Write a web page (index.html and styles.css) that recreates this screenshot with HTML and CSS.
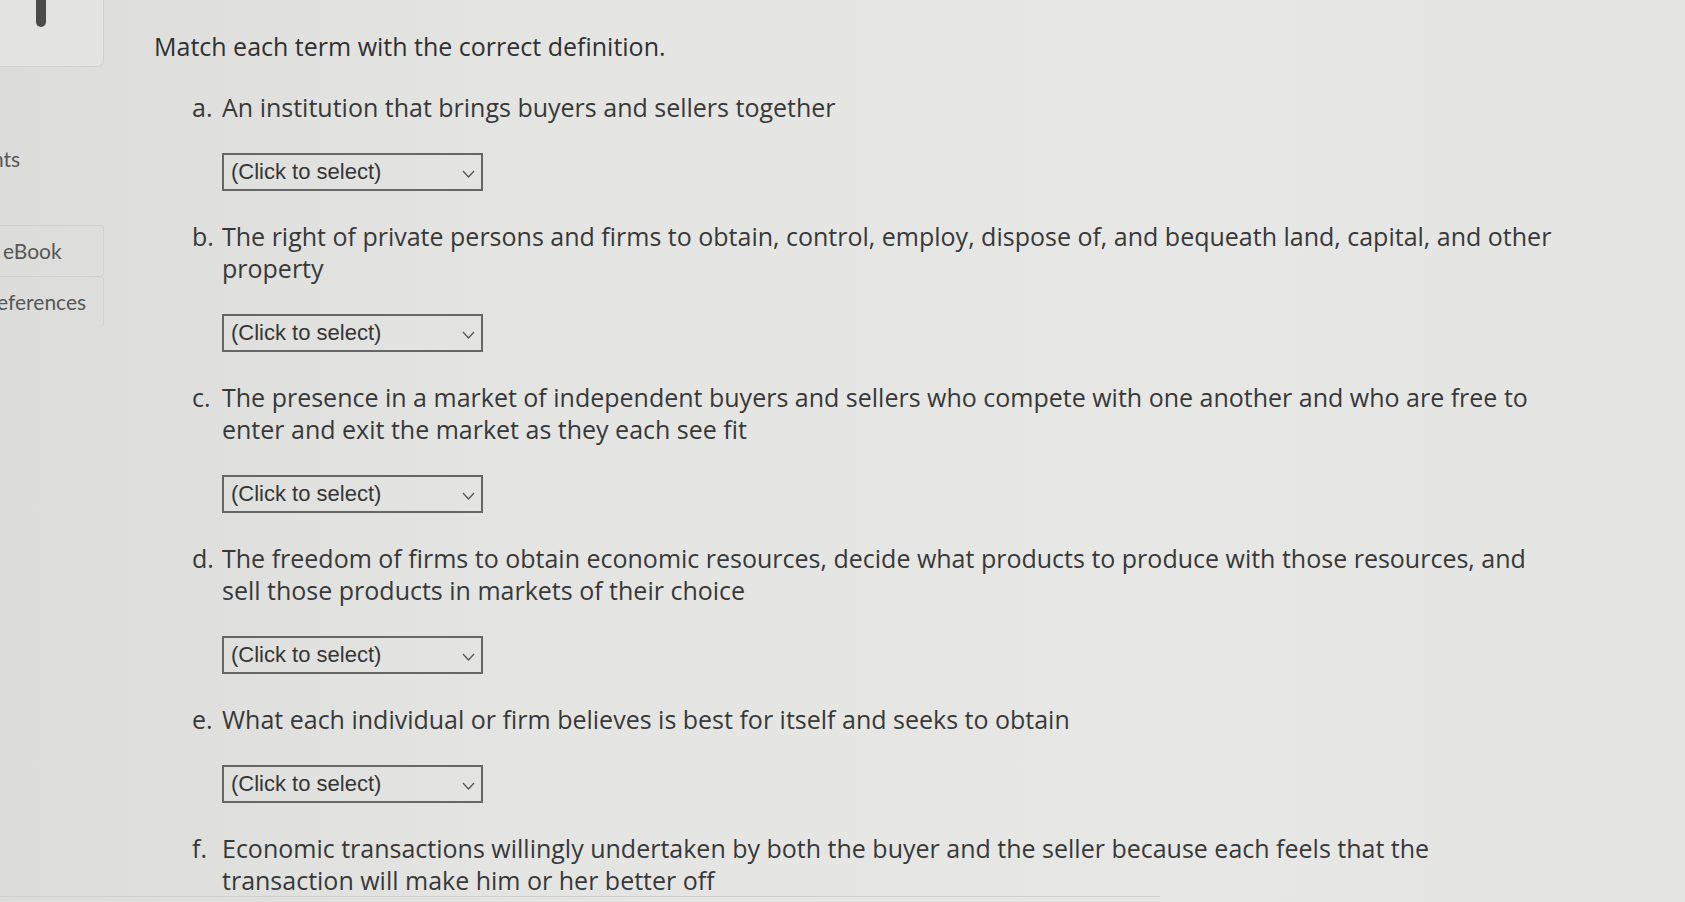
FILE: index.html
```html
<!DOCTYPE html>
<html lang="en">
<head>
<meta charset="utf-8">
<title>Match each term</title>
<link rel="stylesheet" href="styles.css">
</head>
<body>
<div class="page">
  <aside class="sidebar">
    <div class="top-card"><span class="handle"></span></div>
    <div class="points"><span>nts</span></div>
    <div class="side-links">
      <div class="side-link">eBook</div>
      <div class="side-link cut">eferences</div>
    </div>
  </aside>
  <main class="main">
    <h1 class="title">Match each term with the correct definition.</h1>
    <ol class="items">
      <li class="item">
        <div class="term"><span class="letter">a.</span><span class="def">An institution that brings buyers and sellers together</span></div>
        <div class="select"><span>(Click to select)</span><svg class="chev" viewBox="0 0 13 8" width="13" height="8"><path d="M1 1 L6.5 7 L12 1" fill="none" stroke="#555" stroke-width="1.3"/></svg></div>
      </li>
      <li class="item">
        <div class="term"><span class="letter">b.</span><span class="def">The right of private persons and firms to obtain, control, employ, dispose of, and bequeath land, capital, and other property</span></div>
        <div class="select"><span>(Click to select)</span><svg class="chev" viewBox="0 0 13 8" width="13" height="8"><path d="M1 1 L6.5 7 L12 1" fill="none" stroke="#555" stroke-width="1.3"/></svg></div>
      </li>
      <li class="item">
        <div class="term"><span class="letter">c.</span><span class="def">The presence in a market of independent buyers and sellers who compete with one another and who are free to enter and exit the market as they each see fit</span></div>
        <div class="select"><span>(Click to select)</span><svg class="chev" viewBox="0 0 13 8" width="13" height="8"><path d="M1 1 L6.5 7 L12 1" fill="none" stroke="#555" stroke-width="1.3"/></svg></div>
      </li>
      <li class="item">
        <div class="term"><span class="letter">d.</span><span class="def">The freedom of firms to obtain economic resources, decide what products to produce with those resources, and sell those products in markets of their choice</span></div>
        <div class="select"><span>(Click to select)</span><svg class="chev" viewBox="0 0 13 8" width="13" height="8"><path d="M1 1 L6.5 7 L12 1" fill="none" stroke="#555" stroke-width="1.3"/></svg></div>
      </li>
      <li class="item">
        <div class="term"><span class="letter">e.</span><span class="def">What each individual or firm believes is best for itself and seeks to obtain</span></div>
        <div class="select"><span>(Click to select)</span><svg class="chev" viewBox="0 0 13 8" width="13" height="8"><path d="M1 1 L6.5 7 L12 1" fill="none" stroke="#555" stroke-width="1.3"/></svg></div>
      </li>
      <li class="item last">
        <div class="term"><span class="letter">f.</span><span class="def narrow">Economic transactions willingly undertaken by both the buyer and the seller because each feels that the transaction will make him or her better off</span></div>
      </li>
    </ol>
  </main>
</div>
<div class="rule"></div>
</body>
</html>
```

FILE: styles.css
```css
html, body {
  margin: 0;
  padding: 0;
  height: 100%;
  overflow: hidden;
}

body {
  background: linear-gradient(90deg, #dcdddb 0%, #e4e5e3 30%, #e7e8e6 70%, #e4e5e3 100%);
  font-family: "Open Sans", Lato, sans-serif;
  color: #383838;
}

.page {
  display: flex;
  align-items: flex-start;
}

/* ---------- sidebar ---------- */
.sidebar {
  width: 104px;
  flex: 0 0 104px;
  overflow: hidden;
  color: #575757;
  font-family: Lato, "Open Sans", sans-serif;
  font-size: 21px;
}

.top-card {
  height: 66px;
  border-right: 1px solid #d1d2d0;
  border-bottom: 1px solid #d1d2d0;
  border-bottom-right-radius: 6px;
  background: #e3e4e2;
  display: flex;
  justify-content: flex-start;
  padding-left: 36px;
}

.handle {
  width: 10px;
  height: 27px;
  background: #4b4b4b;
  border-radius: 0 0 5px 5px;
}

.points {
  margin-top: 80px;
  height: 24px;
  line-height: 24px;
  overflow: hidden;
}

.points span {
  display: inline-block;
  margin-left: -8px;
}

.side-links {
  margin-top: 54px;
}

.side-link {
  height: 50px;
  line-height: 50px;
  padding-left: 3px;
  border: 1px solid #d1d2d0;
  border-left: none;
  border-radius: 0 4px 4px 0;
  margin-bottom: -1px;
  white-space: nowrap;
}

.side-link.cut {
  padding-left: 0;
  text-indent: -3px;
}

/* ---------- main ---------- */
.main {
  flex: 1;
  padding-left: 50px;
  padding-top: 31px;
}

.title {
  margin: 0;
  font-size: 25px;
  font-weight: 400;
  line-height: 30px;
  color: #303030;
}

.items {
  list-style: none;
  margin: 30px 0 0 38px;
  padding: 0;
}

.item {
  padding-bottom: 29px;
}

.item.last {
  padding-bottom: 0;
}

.term {
  display: flex;
  font-size: 25px;
  line-height: 32px;
  color: #383838;
}

.letter {
  flex: 0 0 30px;
}

.def {
  max-width: 1338px;
}

.def.narrow {
  max-width: 1260px;
}

.select {
  margin-top: 30px;
  width: 261px;
  height: 38px;
  box-sizing: border-box;
  border: 2px solid #666;
  margin-left: 30px;
  display: flex;
  align-items: center;
  justify-content: space-between;
  padding: 0 6px 0 7px;
  font-family: "Liberation Sans", Arial, sans-serif;
  font-size: 22px;
  color: #353535;
}

.chev {
  margin-top: 4px;
}

.rule {
  width: 1160px;
  height: 0;
  border-top: 1px solid #cfd0ce;
}
```
